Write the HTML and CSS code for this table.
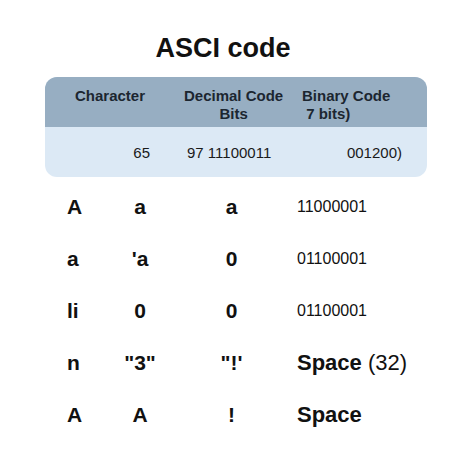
FILE: index.html
```html
<!DOCTYPE html>
<html>
<head>
<meta charset="utf-8">
<link rel="stylesheet" href="styles.css">
</head>
<body>
<div class="page">
  <h1 class="title">ASCI code</h1>
  <div class="table">
    <div class="thead">
      <div class="th th-char">Character</div>
      <div class="th th-dec">Decimal Code<br>Bits</div>
      <div class="th th-bin">Binary Code<br>&nbsp;7 bits)</div>
    </div>
    <div class="tbody">
      <div class="td td-a">65</div>
      <div class="td td-b">97 11100011</div>
      <div class="td td-c">001200)</div>
    </div>
  </div>
  <div class="rows">
    <div class="cell c1">A</div><div class="cell c2">a</div><div class="cell c3">a</div><div class="cell c4 num">11000001</div>
    <div class="cell c1">a</div><div class="cell c2">'a</div><div class="cell c3">0</div><div class="cell c4 num">01100001</div>
    <div class="cell c1">li</div><div class="cell c2">0</div><div class="cell c3">0</div><div class="cell c4 num">01100001</div>
    <div class="cell c1">n</div><div class="cell c2">"3"</div><div class="cell c3">"!'</div><div class="cell c4">Space <span class="reg">(32)</span></div>
    <div class="cell c1">A</div><div class="cell c2">A</div><div class="cell c3">!</div><div class="cell c4">Space</div>
  </div>
</div>
</body>
</html>
```
FILE: styles.css
```css
html, body {
  margin: 0;
  padding: 0;
  background: #ffffff;
}
body {
  font-family: "Liberation Sans", Arial, sans-serif;
  color: #111111;
}
.page {
  width: 474px;
  height: 474px;
  padding-top: 32px;
  box-sizing: border-box;
}
.title {
  margin: 0;
  font-size: 27px;
  line-height: 32px;
  font-weight: bold;
  text-align: center;
  padding-right: 28px;
}
.table {
  margin: 13px 0 0 45px;
  width: 382px;
  border-radius: 12px;
  overflow: hidden;
  background: #dce9f5;
}
.thead {
  background: #97aec2;
  height: 50px;
  box-sizing: border-box;
  padding: 10px 0 0 30px;
  display: grid;
  grid-template-columns: 109px 118px 1fr;
  align-items: start;
  font-size: 15px;
  line-height: 18px;
  font-weight: bold;
  color: #1c2630;
}
.th-dec {
  justify-self: start;
  text-align: center;
}
.tbody {
  height: 50px;
  display: grid;
  grid-template-columns: 105px 1fr auto;
  align-items: center;
  padding-right: 25px;
  font-size: 15px;
  color: #1a1a1a;
}
.td-a { text-align: right; }
.td-b { padding-left: 37px; }
.rows {
  margin-top: 4px;
  padding-left: 67px;
  display: grid;
  grid-template-columns: 50px 46px 134px 1fr;
  grid-auto-rows: 52px;
  align-items: center;
  font-size: 21px;
  font-weight: bold;
  color: #111111;
}
.c2, .c3 { text-align: center; }
.c3 { padding-left: 3px; }
.c4 { font-size: 22px; }
.num {
  font-size: 16px;
  font-weight: normal;
}
.reg {
  font-weight: normal;
}
```
